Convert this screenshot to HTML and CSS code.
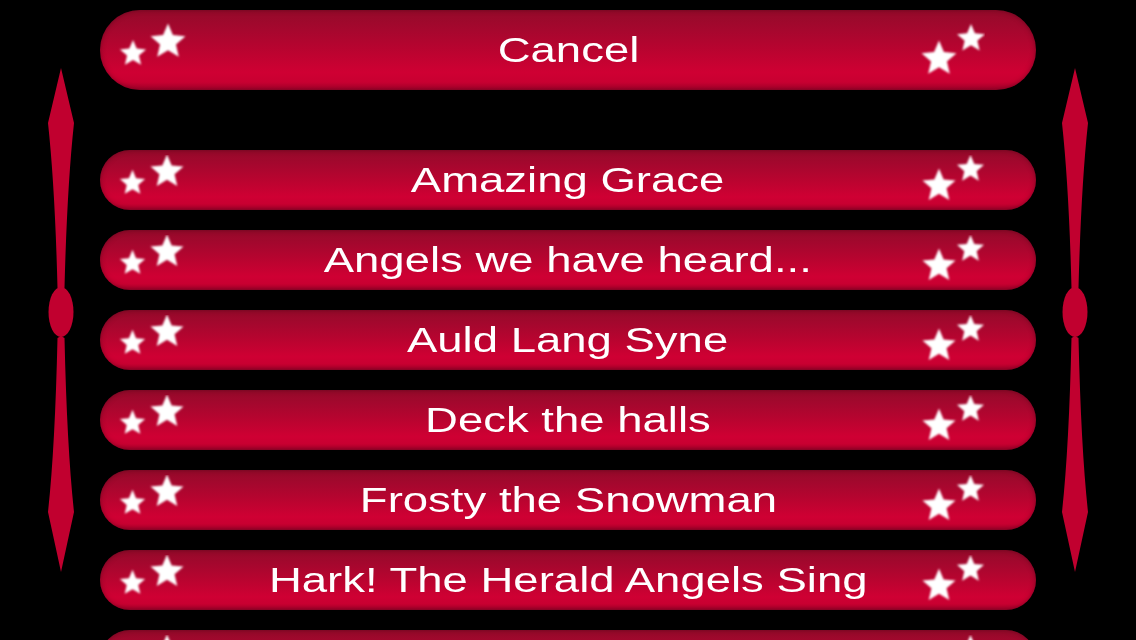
FILE: index.html
```html
<!DOCTYPE html>
<html lang="en">
<head>
    <meta charset="UTF-8">
    <meta name="viewport" content="width=device-width, initial-scale=1.0">
    <title>Christmas Songs</title>
    <link rel="stylesheet" href="styles.css">
</head>
<body>
    <svg class="defs" width="0" height="0">
        <defs>
            <filter id="glow" x="-20%" y="-20%" width="140%" height="140%">
                <feGaussianBlur stdDeviation="1.1"/>
            </filter>
            <symbol id="star" viewBox="0 0 24 24">
                <path d="M12 1.5L14.94 8.45 22.46 9.1 16.76 14.05 18.47 21.4 12 17.5 5.53 21.4 7.24 14.05 1.54 9.1 9.06 8.45Z" fill="#fff"/>
            </symbol>
            <!-- list rows -->
            <symbol id="stars-left" viewBox="0 0 70 50">
                <g filter="url(#glow)">
                    <use href="#star" x="0" y="13" width="29" height="29"/>
                    <use href="#star" x="30" y="-3" width="38" height="38"/>
                </g>
            </symbol>
            <symbol id="stars-right" viewBox="0 0 70 50">
                <g filter="url(#glow)">
                    <use href="#star" x="5" y="11" width="38" height="38"/>
                    <use href="#star" x="40" y="-2" width="31" height="31"/>
                </g>
            </symbol>
            <!-- cancel button, stars spread a bit more -->
            <symbol id="stars-left-c" viewBox="0 0 70 56">
                <g filter="url(#glow)">
                    <use href="#star" x="0" y="16" width="30" height="30"/>
                    <use href="#star" x="30" y="-1" width="40" height="40"/>
                </g>
            </symbol>
            <symbol id="stars-right-c" viewBox="0 0 70 56">
                <g filter="url(#glow)">
                    <use href="#star" x="4" y="16" width="40" height="40"/>
                    <use href="#star" x="40" y="0" width="32" height="32"/>
                </g>
            </symbol>
        </defs>
    </svg>

    <div class="screen">
        <div class="side">
            <svg class="ornament" viewBox="0 0 28 504">
                <path d="M14 0 L27 55 Q20 120 17.5 220 L14 222 L10.5 220 Q8 120 1 55 Z" fill="#c1002f"/>
                <path d="M14 504 L27 444 Q20 380 17.5 270 L14 268 L10.5 270 Q8 380 1 444 Z" fill="#c1002f"/>
                <ellipse cx="14" cy="244" rx="12.5" ry="25" fill="#c1002f"/>
            </svg>
        </div>

        <div class="list">
            <div class="btn cancel">
                <svg class="stars stars-l"><use href="#stars-left-c"/></svg>
                <span class="label">Cancel</span>
                <svg class="stars stars-r"><use href="#stars-right-c"/></svg>
            </div>

            <div class="btn">
                <svg class="stars stars-l"><use href="#stars-left"/></svg>
                <span class="label">Amazing Grace</span>
                <svg class="stars stars-r"><use href="#stars-right"/></svg>
            </div>
            <div class="btn">
                <svg class="stars stars-l"><use href="#stars-left"/></svg>
                <span class="label">Angels we have heard...</span>
                <svg class="stars stars-r"><use href="#stars-right"/></svg>
            </div>
            <div class="btn">
                <svg class="stars stars-l"><use href="#stars-left"/></svg>
                <span class="label">Auld Lang Syne</span>
                <svg class="stars stars-r"><use href="#stars-right"/></svg>
            </div>
            <div class="btn">
                <svg class="stars stars-l"><use href="#stars-left"/></svg>
                <span class="label">Deck the halls</span>
                <svg class="stars stars-r"><use href="#stars-right"/></svg>
            </div>
            <div class="btn">
                <svg class="stars stars-l"><use href="#stars-left"/></svg>
                <span class="label">Frosty the Snowman</span>
                <svg class="stars stars-r"><use href="#stars-right"/></svg>
            </div>
            <div class="btn">
                <svg class="stars stars-l"><use href="#stars-left"/></svg>
                <span class="label">Hark! The Herald Angels Sing</span>
                <svg class="stars stars-r"><use href="#stars-right"/></svg>
            </div>
            <!-- next row, only its top edge shows -->
            <div class="btn">
                <svg class="stars stars-l"><use href="#stars-left"/></svg>
                <span class="label"></span>
                <svg class="stars stars-r"><use href="#stars-right"/></svg>
            </div>
        </div>

        <div class="side">
            <svg class="ornament" viewBox="0 0 28 504">
                <path d="M14 0 L27 55 Q20 120 17.5 220 L14 222 L10.5 220 Q8 120 1 55 Z" fill="#c1002f"/>
                <path d="M14 504 L27 444 Q20 380 17.5 270 L14 268 L10.5 270 Q8 380 1 444 Z" fill="#c1002f"/>
                <ellipse cx="14" cy="244" rx="12.5" ry="25" fill="#c1002f"/>
            </svg>
        </div>
    </div>
</body>
</html>
```

FILE: styles.css
```css
html, body {
    margin: 0;
    padding: 0;
    height: 100%;
    background-color: #000;
    overflow: hidden;
}
body {
    font-family: "Liberation Sans", Arial, sans-serif;
    color: #fff;
}
.defs {
    display: block;
    height: 0;
    width: 0;
}
.screen {
    display: flex;
    height: 640px;
}
.side {
    width: 100px;
    flex: none;
    display: flex;
    justify-content: center;
    padding-top: 68px;
}
.side:first-child {
    padding-left: 22px;
    box-sizing: border-box;
}
.side:last-child {
    padding-right: 22px;
    box-sizing: border-box;
}
.ornament {
    width: 28px;
    height: 504px;
    display: block;
}
.list {
    width: 936px;
    flex: none;
    padding-top: 10px;
    display: flex;
    flex-direction: column;
    gap: 20px;
}
.btn {
    height: 60px;
    flex: none;
    border-radius: 30px;
    display: grid;
    grid-template-columns: 1fr auto 1fr;
    align-items: center;
    background: linear-gradient(to bottom, #940a2a 0%, #a6072e 25%, #bd0330 55%, #cf0033 78%, #c80031 90%, #a0022a 100%);
    box-shadow: inset 0 0 5px rgba(70, 0, 20, 0.55);
}
.btn.cancel {
    height: 80px;
    border-radius: 40px;
    margin-bottom: 40px;
}
.label {
    display: inline-block;
    font-size: 35px;
    line-height: 40px;
    white-space: nowrap;
    transform: scaleX(1.3);
}
.stars {
    width: 70px;
    height: 50px;
    display: block;
    overflow: visible;
}
.cancel .stars {
    height: 56px;
}
.stars-l {
    justify-self: start;
    margin-left: 18px;
}
.stars-r {
    justify-self: end;
    margin-right: 51px;
}
```
